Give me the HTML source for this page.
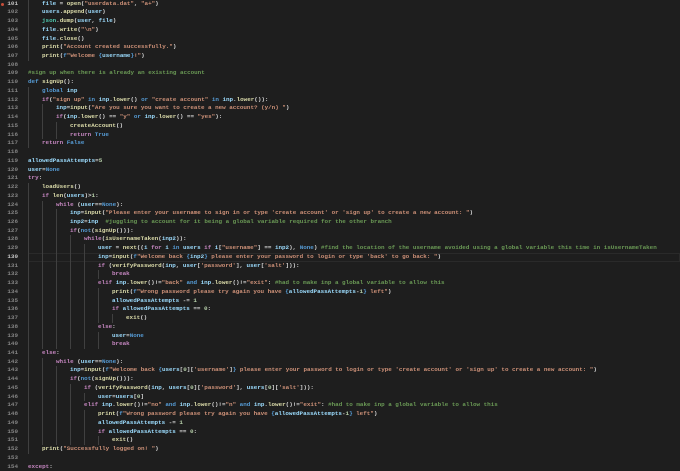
<!DOCTYPE html>
<html><head><meta charset="utf-8"><style>
html,body{margin:0;padding:0;background:#1e1e1e;width:680px;height:471px;overflow:hidden}
#w{position:absolute;left:0;top:-0.4px;width:680px;font-family:"Liberation Mono",monospace;font-size:5.9px;line-height:8.74px;font-weight:bold;color:#d4d4d4}
.l{height:8.74px;position:relative;overflow:visible}
.n{position:absolute;left:0;width:18px;text-align:right;color:#858585}
.t{position:absolute;left:28px;white-space:pre}
i{display:inline-block;width:14px;height:8.74px;vertical-align:top;box-shadow:inset 1px 0 #404040;font-style:normal}
.k{color:#c586c0}.b{color:#569cd6}.f{color:#dcdcaa}.v{color:#9cdcfe}.s{color:#ce9178}.c{color:#6a9955}.m{color:#b5cea8}.g{color:#4ec9b0}
.cur{box-shadow:inset 0 0 0 1px #2a2a2a}
</style></head><body><div id="w"><div class="l"><span class="n" style="color:#c0c0c0">101</span><span style="position:absolute;left:1px;top:3px;width:3px;height:3px;background:#c74e39;border-radius:2px"></span><span class="t"><i></i><span class="v">file</span> = <span class="f">open</span>(<span class="s">"userdata.dat"</span>, <span class="s">"a+"</span>)</span></div><div class="l"><span class="n">102</span><span class="t"><i></i><span class="v">users</span>.<span class="f">append</span>(<span class="v">user</span>)</span></div><div class="l"><span class="n">103</span><span class="t"><i></i><span class="g">json</span>.<span class="f">dump</span>(<span class="v">user</span>, <span class="v">file</span>)</span></div><div class="l"><span class="n">104</span><span class="t"><i></i><span class="v">file</span>.<span class="f">write</span>(<span class="s">"\n"</span>)</span></div><div class="l"><span class="n">105</span><span class="t"><i></i><span class="v">file</span>.<span class="f">close</span>()</span></div><div class="l"><span class="n">106</span><span class="t"><i></i><span class="f">print</span>(<span class="s">"Account created successfully."</span>)</span></div><div class="l"><span class="n">107</span><span class="t"><i></i><span class="f">print</span>(<span class="b">f</span><span class="s">"Welcome </span><span class="b">{</span><span class="v">username</span><span class="b">}</span><span class="s">!"</span>)</span></div><div class="l"><span class="n">108</span></div><div class="l"><span class="n">109</span><span class="t"><span class="c">#sign up when there is already an existing account</span></span></div><div class="l"><span class="n">110</span><span class="t"><span class="b">def</span> <span class="f">signUp</span>():</span></div><div class="l"><span class="n">111</span><span class="t"><i></i><span class="b">global</span> <span class="v">inp</span></span></div><div class="l"><span class="n">112</span><span class="t"><i></i><span class="k">if</span>(<span class="s">"sign up"</span> <span class="b">in</span> <span class="v">inp</span>.<span class="f">lower</span>() <span class="b">or</span> <span class="s">"create account"</span> <span class="b">in</span> <span class="v">inp</span>.<span class="f">lower</span>()):</span></div><div class="l"><span class="n">113</span><span class="t"><i></i><i></i><span class="v">inp</span>=<span class="f">input</span>(<span class="s">"Are you sure you want to create a new account? (y/n) "</span>)</span></div><div class="l"><span class="n">114</span><span class="t"><i></i><i></i><span class="k">if</span>(<span class="v">inp</span>.<span class="f">lower</span>() == <span class="s">"y"</span> <span class="b">or</span> <span class="v">inp</span>.<span class="f">lower</span>() == <span class="s">"yes"</span>):</span></div><div class="l"><span class="n">115</span><span class="t"><i></i><i></i><i></i><span class="f">createAccount</span>()</span></div><div class="l"><span class="n">116</span><span class="t"><i></i><i></i><i></i><span class="k">return</span> <span class="b">True</span></span></div><div class="l"><span class="n">117</span><span class="t"><i></i><span class="k">return</span> <span class="b">False</span></span></div><div class="l"><span class="n">118</span></div><div class="l"><span class="n">119</span><span class="t"><span class="v">allowedPassAttempts</span>=<span class="m">5</span></span></div><div class="l"><span class="n">120</span><span class="t"><span class="v">user</span>=<span class="b">None</span></span></div><div class="l"><span class="n">121</span><span class="t"><span class="k">try</span>:</span></div><div class="l"><span class="n">122</span><span class="t"><i></i><span class="f">loadUsers</span>()</span></div><div class="l"><span class="n">123</span><span class="t"><i></i><span class="k">if</span> <span class="f">len</span>(<span class="v">users</span>)&gt;<span class="m">1</span>:</span></div><div class="l"><span class="n">124</span><span class="t"><i></i><i></i><span class="k">while</span> (<span class="v">user</span>==<span class="b">None</span>):</span></div><div class="l"><span class="n">125</span><span class="t"><i></i><i></i><i></i><span class="v">inp</span>=<span class="f">input</span>(<span class="s">"Please enter your username to sign in or type 'create account' or 'sign up' to create a new account: "</span>)</span></div><div class="l"><span class="n">126</span><span class="t"><i></i><i></i><i></i><span class="v">inp2</span>=<span class="v">inp</span>  <span class="c">#juggling to account for it being a global variable required for the other branch</span></span></div><div class="l"><span class="n">127</span><span class="t"><i></i><i></i><i></i><span class="k">if</span>(<span class="b">not</span>(<span class="f">signUp</span>())):</span></div><div class="l"><span class="n">128</span><span class="t"><i></i><i></i><i></i><i></i><span class="k">while</span>(<span class="f">isUsernameTaken</span>(<span class="v">inp2</span>)):</span></div><div class="l"><span class="n">129</span><span class="t"><i></i><i></i><i></i><i></i><i></i><span class="v">user</span> = <span class="f">next</span>((<span class="v">i</span> <span class="k">for</span> <span class="v">i</span> <span class="b">in</span> <span class="v">users</span> <span class="k">if</span> <span class="v">i</span>[<span class="s">"username"</span>] == <span class="v">inp2</span>), <span class="b">None</span>) <span class="c">#find the location of the username avoided using a global variable this time in isUsernameTaken</span></span></div><div class="l"><span class="n" style="color:#c6c6c6">130</span><span style="position:absolute;left:28px;width:652px;height:8.74px" class="cur"></span><span class="t"><i></i><i></i><i></i><i></i><i></i><span class="v">inp</span>=<span class="f">input</span>(<span class="b">f</span><span class="s">"Welcome back </span><span class="b">{</span><span class="v">inp2</span><span class="b">}</span><span class="s"> please enter your password to login or type 'back' to go back: "</span>)</span></div><div class="l"><span class="n">131</span><span class="t"><i></i><i></i><i></i><i></i><i></i><span class="k">if</span> (<span class="f">verifyPassword</span>(<span class="v">inp</span>, <span class="v">user</span>[<span class="s">'password'</span>], <span class="v">user</span>[<span class="s">'salt'</span>])):</span></div><div class="l"><span class="n">132</span><span class="t"><i></i><i></i><i></i><i></i><i></i><i></i><span class="k">break</span></span></div><div class="l"><span class="n">133</span><span class="t"><i></i><i></i><i></i><i></i><i></i><span class="k">elif</span> <span class="v">inp</span>.<span class="f">lower</span>()!=<span class="s">"back"</span> <span class="b">and</span> <span class="v">inp</span>.<span class="f">lower</span>()!=<span class="s">"exit"</span>: <span class="c">#had to make inp a global variable to allow this</span></span></div><div class="l"><span class="n">134</span><span class="t"><i></i><i></i><i></i><i></i><i></i><i></i><span class="f">print</span>(<span class="b">f</span><span class="s">"Wrong password please try again you have </span><span class="b">{</span><span class="v">allowedPassAttempts</span>-<span class="m">1</span><span class="b">}</span><span class="s"> left"</span>)</span></div><div class="l"><span class="n">135</span><span class="t"><i></i><i></i><i></i><i></i><i></i><i></i><span class="v">allowedPassAttempts</span> -= <span class="m">1</span></span></div><div class="l"><span class="n">136</span><span class="t"><i></i><i></i><i></i><i></i><i></i><i></i><span class="k">if</span> <span class="v">allowedPassAttempts</span> == <span class="m">0</span>:</span></div><div class="l"><span class="n">137</span><span class="t"><i></i><i></i><i></i><i></i><i></i><i></i><i></i><span class="f">exit</span>()</span></div><div class="l"><span class="n">138</span><span class="t"><i></i><i></i><i></i><i></i><i></i><span class="k">else</span>:</span></div><div class="l"><span class="n">139</span><span class="t"><i></i><i></i><i></i><i></i><i></i><i></i><span class="v">user</span>=<span class="b">None</span></span></div><div class="l"><span class="n">140</span><span class="t"><i></i><i></i><i></i><i></i><i></i><i></i><span class="k">break</span></span></div><div class="l"><span class="n">141</span><span class="t"><i></i><span class="k">else</span>:</span></div><div class="l"><span class="n">142</span><span class="t"><i></i><i></i><span class="k">while</span> (<span class="v">user</span>==<span class="b">None</span>):</span></div><div class="l"><span class="n">143</span><span class="t"><i></i><i></i><i></i><span class="v">inp</span>=<span class="f">input</span>(<span class="b">f</span><span class="s">"Welcome back </span><span class="b">{</span><span class="v">users</span>[<span class="m">0</span>][<span class="s">'username'</span>]<span class="b">}</span><span class="s"> please enter your password to login or type 'create account' or 'sign up' to create a new account: "</span>)</span></div><div class="l"><span class="n">144</span><span class="t"><i></i><i></i><i></i><span class="k">if</span>(<span class="b">not</span>(<span class="f">signUp</span>())):</span></div><div class="l"><span class="n">145</span><span class="t"><i></i><i></i><i></i><i></i><span class="k">if</span> (<span class="f">verifyPassword</span>(<span class="v">inp</span>, <span class="v">users</span>[<span class="m">0</span>][<span class="s">'password'</span>], <span class="v">users</span>[<span class="m">0</span>][<span class="s">'salt'</span>])):</span></div><div class="l"><span class="n">146</span><span class="t"><i></i><i></i><i></i><i></i><i></i><span class="v">user</span>=<span class="v">users</span>[<span class="m">0</span>]</span></div><div class="l"><span class="n">147</span><span class="t"><i></i><i></i><i></i><i></i><span class="k">elif</span> <span class="v">inp</span>.<span class="f">lower</span>()!=<span class="s">"no"</span> <span class="b">and</span> <span class="v">inp</span>.<span class="f">lower</span>()!=<span class="s">"n"</span> <span class="b">and</span> <span class="v">inp</span>.<span class="f">lower</span>()!=<span class="s">"exit"</span>: <span class="c">#had to make inp a global variable to allow this</span></span></div><div class="l"><span class="n">148</span><span class="t"><i></i><i></i><i></i><i></i><i></i><span class="f">print</span>(<span class="b">f</span><span class="s">"Wrong password please try again you have </span><span class="b">{</span><span class="v">allowedPassAttempts</span>-<span class="m">1</span><span class="b">}</span><span class="s"> left"</span>)</span></div><div class="l"><span class="n">149</span><span class="t"><i></i><i></i><i></i><i></i><i></i><span class="v">allowedPassAttempts</span> -= <span class="m">1</span></span></div><div class="l"><span class="n">150</span><span class="t"><i></i><i></i><i></i><i></i><i></i><span class="k">if</span> <span class="v">allowedPassAttempts</span> == <span class="m">0</span>:</span></div><div class="l"><span class="n">151</span><span class="t"><i></i><i></i><i></i><i></i><i></i><i></i><span class="f">exit</span>()</span></div><div class="l"><span class="n">152</span><span class="t"><i></i><span class="f">print</span>(<span class="s">"Successfully logged on! "</span>)</span></div><div class="l"><span class="n">153</span></div><div class="l"><span class="n">154</span><span class="t"><span class="k">except</span>:</span></div></div></body></html>
